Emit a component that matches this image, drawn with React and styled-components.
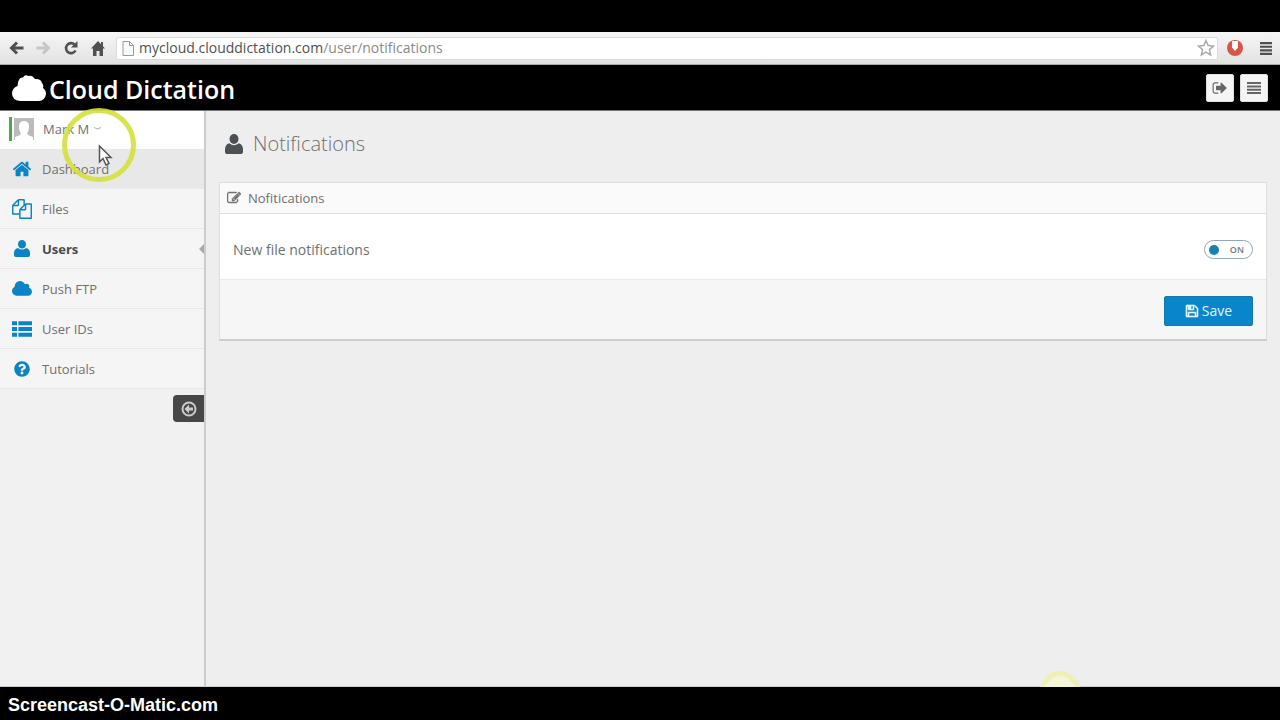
import React from "react";
import styled, { createGlobalStyle, css } from "styled-components";
import { FaQuestionCircle } from "react-icons/fa";

const GlobalStyle = createGlobalStyle`
  *, *::before, *::after { box-sizing: border-box; }
  body { margin: 0; background: #000; font-family: "Open Sans", sans-serif; font-size: 13px; color: #707070; }
  a { color: inherit; text-decoration: none; }
  button { font: inherit; cursor: pointer; }
`;

const Page = styled.div`
  min-height: 100vh;
  display: flex;
  flex-direction: column;
  padding-top: 32px;
`;

const BrowserBar = styled.div`
  height: 33px;
  flex: none;
  display: flex;
  align-items: center;
  gap: 6px;
  padding: 0 4px 0 6px;
  background: linear-gradient(#f6f6f6, #e2e2e2);
  border-bottom: 1px solid #aaa;
`;

const BrowserButton = styled.button`
  width: 21px;
  height: 24px;
  padding: 0;
  border: 0;
  background: none;
  color: ${(p) => (p.$faded ? "#c6c6c6" : "#505050")};
  display: grid;
  place-items: center;
`;

const BrowserActions = styled.div`
  display: flex;
  gap: 10px;
`;

const AddressBar = styled.div`
  flex: 1;
  height: 23px;
  margin-left: 2px;
  display: flex;
  align-items: center;
  gap: 5px;
  padding: 0 2px 0 5px;
  background: #fff;
  border: 1px solid #dadada;
  border-radius: 2px;
`;

const AddressText = styled.div`
  flex: 1;
  font-size: 14px;
  line-height: 20px;
  color: #8a8a8a;
  b { font-weight: 400; color: #505050; }
`;

const Header = styled.header`
  height: 46px;
  flex: none;
  display: flex;
  align-items: center;
  justify-content: space-between;
  padding: 0 12px;
  background: #000;
  border-bottom: 1px solid #777;
`;

const Brand = styled.a`
  display: flex;
  align-items: center;
  gap: 3px;
  color: #fff;
  font-size: 25px;
  font-weight: 600;
  line-height: 32px;
`;

const BrandName = styled.span`
  padding-top: 2px;
`;

const HeaderTools = styled.div`
  display: flex;
  gap: 6px;
`;

const HeaderButton = styled.button`
  width: 28px;
  height: 28px;
  padding: 0;
  display: grid;
  place-items: center;
  color: #666;
  background: #f5f5f5;
  border: 1px solid #ddd;
  border-radius: 2px;
`;

const Body = styled.div`
  flex: 1;
  display: flex;
  background: #eee;
  border-bottom: 1px solid #ccc;
`;

const Sidebar = styled.aside`
  width: 206px;
  flex: none;
  background: #f1f1f1;
  border-right: 2px solid #ccc;
`;

const Account = styled.button`
  width: 100%;
  height: 38px;
  display: flex;
  align-items: center;
  gap: 5px;
  padding: 0 9px 2px;
  color: #707070;
  background: #fff;
  border: 0;
`;

const Avatar = styled.span`
  display: block;
  height: 24px;
  margin-right: 4px;
  border-left: 3px solid #4fa64f;
  svg { display: block; margin: 1px 0 0 2px; }
`;

const NavItem = styled.a`
  height: 40px;
  display: flex;
  align-items: center;
  gap: 10px;
  padding-left: 12px;
  line-height: 20px;
  background: #f5f5f5;
  border-bottom: 1px solid #e8e8e8;
  > svg:first-child { color: #0a84c4; flex: none; }
  ${(p) => p.$hovered && css`background: #e8e8e8;`}
  ${(p) => p.$current && css`font-weight: 700; color: #4a4a4a;`}
`;

const CurrentMark = styled.span`
  margin-left: auto;
  border: 5px solid transparent;
  border-left: 0;
  border-right-color: #aaa;
`;

const Collapse = styled.button`
  display: grid;
  place-items: center;
  width: 31px;
  height: 27px;
  margin: 6px 0 0 auto;
  padding: 0;
  color: #ccc;
  background: #474747;
  border: 0;
  border-radius: 4px 0 0 4px;
`;

const Main = styled.main`
  flex: 1;
  padding: 16px 13px;
`;

const Title = styled.h1`
  margin: 0 0 21px;
  display: flex;
  align-items: center;
  gap: 10px;
  padding-left: 6px;
  font-size: 20px;
  line-height: 34px;
  font-weight: 300;
  color: #707070;
  svg { color: #4c4f53; }
`;

const Panel = styled.form`
  background: #fff;
  border: 1px solid #ddd;
  border-bottom: 2px solid #ccc;
`;

const PanelHeader = styled.h2`
  margin: 0;
  height: 31px;
  display: flex;
  align-items: center;
  gap: 7px;
  padding-left: 7px;
  font-size: 13px;
  font-weight: 400;
  background: #fafafa;
  border-bottom: 1px solid #ddd;
`;

const Setting = styled.label`
  height: 65px;
  display: flex;
  align-items: center;
  justify-content: space-between;
  padding: 6px 13px 0 13px;
  font-size: 14px;
`;

const Toggle = styled.span`
  width: 49px;
  height: 19px;
  display: flex;
  align-items: center;
  justify-content: space-between;
  padding: 0 8px 0 4px;
  border: 1px solid #8fa9b9;
  border-radius: 10px;
  background: #fff;
  color: #777;
  font-size: 9px;
  font-weight: 600;
`;

const ToggleInput = styled.input`
  appearance: none;
  width: 10px;
  height: 10px;
  margin: 0;
  border-radius: 50%;
  background: #1a7fb5;
`;

const PanelFooter = styled.div`
  height: 60px;
  display: flex;
  align-items: center;
  justify-content: flex-end;
  padding: 2px 13px 0;
  background: #f6f6f6;
  border-top: 1px solid #e9e9e9;
`;

const SaveButton = styled.button`
  width: 89px;
  height: 30px;
  display: flex;
  align-items: center;
  justify-content: center;
  gap: 3px;
  padding: 0;
  color: #e4f3fb;
  font-size: 14px;
  background: #0986cb;
  border: 1px solid #1478ad;
  border-radius: 2px;
`;

const Watermark = styled.footer`
  height: 33px;
  flex: none;
  padding: 1px 0 0 8px;
  color: #fff;
  font: 700 18px/35px "Liberation Sans", sans-serif;
`;

const Pointer = styled.div`
  position: absolute;
  left: 62px;
  top: 107px;
  pointer-events: none;
  svg { display: block; }
`;

const ClickRipple = styled.div`
  position: absolute;
  right: 200px;
  bottom: 33px;
  width: 40px;
  height: 16px;
  overflow: hidden;
  pointer-events: none;
  &::before {
    content: "";
    display: block;
    width: 40px;
    height: 40px;
    border: 5px solid #efefb8;
    border-radius: 50%;
    background: #f5f5d8;
  }
`;

const shapes = {
  home: "M1472 992v480q0 26-19 45t-45 19h-384v-384h-256v384h-384q-26 0-45-19t-19-45v-480q0-1 .5-3t.5-3l575-474 575 474q1 2 1 6zm223-69l-62 74q-8 9-21 11h-3q-13 0-21-7l-692-577-692 577q-12 8-24 7-13-2-21-11l-62-74q-8-10-7-23.5t11-21.5l719-599q32-26 76-26t76 26l244 204v-195q0-14 9-23t23-9h192q14 0 23 9t9 23v408l219 182q10 8 11 21.5t-7 23.5z",
  cloud: "M1856 1152q0 159-112.5 271.5t-271.5 112.5h-1088q-185 0-316.5-131.5t-131.5-316.5q0-132 71-241.5t187-163.5q-2-28-2-43 0-212 150-362t362-150q158 0 286.5 88t187.5 230q70-62 166-62 106 0 181 75t75 181q0 75-41 138 129 30 213 134.5t84 239.5z",
  files: "M1696 384q40 0 68 28t28 68v1216q0 40-28 68t-68 28h-960q-40 0-68-28t-28-68v-288h-544q-40 0-68-28t-28-68v-672q0-40 20-88t48-76l408-408q28-28 76-48t88-20h416q40 0 68 28t28 68v328q68-40 128-40h416zm-544 213l-299 299h299v-299zm-640-384l-299 299h299v-299zm196 647l316-316v-416h-384v416q0 40-28 68t-68 28h-416v640h512v-256q0-40 20-88t48-76zm956 804v-1152h-384v416q0 40-28 68t-68 28h-416v640h896z",
  list: "M0 200h448v360H0zM576 200h1216v360H576zM0 716h448v360H0zM576 716h1216v360H576zM0 1232h448v360H0zM576 1232h1216v360H576z",
  signOut: "M704 1440q0 4 1 20t.5 26.5-3 23.5-10 19.5-20.5 6.5h-320q-119 0-203.5-84.5t-84.5-203.5v-704q0-119 84.5-203.5t203.5-84.5h320q13 0 22.5 9.5t9.5 22.5q0 4 1 20t.5 26.5-3 23.5-10 19.5-20.5 6.5h-320q-66 0-113 47t-47 113v704q0 66 47 113t113 47h312l11.5 1 11.5 3 8 5.5 7 9 2 13.5zm928-544q0 26-19 45l-544 544q-19 19-45 19t-45-19-19-45v-288h-448q-26 0-45-19t-19-45v-384q0-26 19-45t45-19h448v-288q0-26 19-45t45-19 45 19l544 544q19 19 19 45z",
  edit: "M888 1184l116-116-152-152-116 116v56h96v96h56zm440-720q-16-16-33 1l-350 350q-17 17-1 33t33-1l350-350q17-17 1-33zm80 594v190q0 119-84.5 203.5t-203.5 84.5h-832q-119 0-203.5-84.5t-84.5-203.5v-832q0-119 84.5-203.5t203.5-84.5h832q63 0 117 25 15 7 18 23 3 17-9 29l-49 49q-14 14-32 8-23-6-45-6h-832q-66 0-113 47t-47 113v832q0 66 47 113t113 47h832q66 0 113-47t47-113v-126q0-13 9-22l64-64q15-15 35-7t20 29zm-96-738l288 288-672 672h-288v-288zm444 132l-92 92-288-288 92-92q28-28 68-28t68 28l152 152q28 28 28 68t-28 68z",
  save: "M512 1536h768v-384h-768v384zm896 0h128v-896q0-14-10-38.5t-20-34.5l-281-281q-10-10-34-20t-39-10v416q0 40-28 68t-68 28h-576q-40 0-68-28t-28-68v-416h-128v1280h128v-416q0-40 28-68t68-28h832q40 0 68 28t28 68v416zm-384-928v-320q0-13-9.5-22.5t-22.5-9.5h-192q-13 0-22.5 9.5t-9.5 22.5v320q0 13 9.5 22.5t22.5 9.5h192q13 0 22.5-9.5t9.5-22.5zm640 32v928q0 40-28 68t-68 28h-1344q-40 0-68-28t-28-68v-1344q0-40 28-68t68-28h928q40 0 88 20t76 48l280 280q28 28 48 76t20 88z",
};

const Glyph = ({ name, size = 20, box = "0 0 1792 1792", bold = 0 }) => (
  <svg width={size} height={size} viewBox={box} fill="currentColor" stroke="currentColor" strokeWidth={bold} aria-hidden="true">
    <path d={shapes[name]} />
  </svg>
);

const Person = ({ width, height }) => (
  <svg width={width} height={height} viewBox="0 0 18 20" preserveAspectRatio="none" fill="currentColor" aria-hidden="true">
    <ellipse cx="9" cy="5" rx="4.500" ry="5" />
    <path d="M4.300 9.300Q9 13.200 13.700 9.300Q18 10.500 18 15.500V18Q18 20 16 20H2Q0 20 0 18V15.500Q0 10.500 4.300 9.300z" />
  </svg>
);

const Bars = ({ width, height }) => (
  <svg width={width} height={height} viewBox="0 0 12 12" preserveAspectRatio="none" fill="none" stroke="currentColor" strokeWidth="2" aria-hidden="true">
    <path d="M0 1h12M0 4.400h12M0 7.700h12M0 11h12" />
  </svg>
);

const nav = [
  { label: "Dashboard", icon: <Glyph name="home" />, hovered: true },
  { label: "Files", icon: <Glyph name="files" /> },
  { label: "Users", icon: <svg width="20" height="17" viewBox="0 0 20 17"><g transform="translate(2 0)"><Person width={16} height={17} /></g></svg>, current: true },
  { label: "Push FTP", icon: <Glyph name="cloud" box="-64 0 1920 1792" /> },
  { label: "User IDs", icon: <Glyph name="list" /> },
  { label: "Tutorials", icon: <svg width="20" height="20" viewBox="0 0 20 20"><FaQuestionCircle x="2" y="2" size={16} /></svg> },
];

export default function App() {
  return (
    <Page>
      <GlobalStyle />
      <BrowserBar>
        <BrowserButton aria-label="Back">
          <svg width="15" height="14" viewBox="0 0 15 14" fill="none" stroke="currentColor" strokeWidth="3"><path d="M14.500 7H3M8 1.500L2.500 7L8 12.500" /></svg>
        </BrowserButton>
        <BrowserButton aria-label="Forward" $faded>
          <svg width="15" height="14" viewBox="0 0 15 14" fill="none" stroke="currentColor" strokeWidth="3"><path d="M.5 7H12M7 1.500L12.500 7L7 12.500" /></svg>
        </BrowserButton>
        <BrowserButton aria-label="Reload">
          <svg width="16" height="16" viewBox="0 0 16 16"><path d="M12.500 10.500A5 5 0 1 1 11.500 4.500" fill="none" stroke="currentColor" strokeWidth="2.600" /><path d="M14.500 1v6.500H8z" fill="currentColor" /></svg>
        </BrowserButton>
        <BrowserButton aria-label="Home">
          <svg width="14" height="15" viewBox="0 0 14 15" fill="currentColor"><path d="M7 0L0 7.500h2V15h3.500v-5h3v5H12V7.500h2L12 5.300V1h-2v2.200z" /></svg>
        </BrowserButton>
        <AddressBar>
          <svg width="12" height="15" viewBox="0 0 12 15" fill="#fafafa" stroke="#999"><path d="M1 .5h6.500l4 4v10H1zM7.500 .5v4h4" /></svg>
          <AddressText><b>mycloud.clouddictation.com</b>/user/notifications</AddressText>
          <svg width="18" height="18" viewBox="0 0 18 18" fill="#fff" stroke="#aaa" strokeWidth="1.500"><path d="M9 1.500l2.200 5 5.300.5-4 3.600 1.200 5.400L9 13.200 4.300 16l1.200-5.400-4-3.600 5.300-.5z" /></svg>
        </AddressBar>
        <BrowserActions>
          <BrowserButton aria-label="Downloads">
            <svg width="18" height="18" viewBox="0 0 18 18"><circle cx="9" cy="9" r="8" fill="#d9544a" /><path d="M6 2h6v6.500L9 12 6 8.500z" fill="#fff" /></svg>
          </BrowserButton>
          <BrowserButton aria-label="Browser menu"><Bars width={12} height={13} /></BrowserButton>
        </BrowserActions>
      </BrowserBar>
      <Header>
        <Brand href="#">
          <svg width="34" height="26" viewBox="0 0 34 26" fill="#fff" aria-hidden="true"><path d="M8 26Q0 25 0 18.500Q0 13 5.500 11Q6 2 11 2.500Q13-1 16.500 1Q20-.5 23 4Q29 3.500 30 8Q32 10 31 13Q34 15 34 19Q33 25.500 27 26z" /></svg>
          <BrandName>Cloud Dictation</BrandName>
        </Brand>
        <HeaderTools>
          <HeaderButton aria-label="Sign out"><Glyph name="signOut" size={16} /></HeaderButton>
          <HeaderButton aria-label="Menu"><Bars width={14} height={12} /></HeaderButton>
        </HeaderTools>
      </Header>
      <Body>
        <Sidebar>
          <Account>
            <Avatar>
              <svg width="20" height="22" viewBox="0 0 20 22"><path d="M0 0h20v22H0z" fill="#bbb" /><path d="M10 3c4 0 5.500 3 5 7-.3 2.500-1 4-2 5l1 2 5 2v3H1v-3l5-2 1-2c-1-1-1.700-2.500-2-5-.5-4 1-7 5-7z" fill="#fff" /></svg>
            </Avatar>
            Mark M
            <svg width="7" height="4" viewBox="0 0 7 4" fill="none" stroke="#aaa"><path d="M0 .5L3.500 2L7 .5" /></svg>
          </Account>
          <nav>
            {nav.map((item) => (
              <NavItem key={item.label} href="#" $hovered={item.hovered} $current={item.current}>
                {item.icon}
                {item.label}
                {item.current && <CurrentMark />}
              </NavItem>
            ))}
          </nav>
          <Collapse aria-label="Collapse menu">
            <svg width="16" height="16" viewBox="0 0 16 16"><circle cx="8" cy="8" r="6.500" fill="none" stroke="currentColor" strokeWidth="2" /><path d="M3.500 8L8 3.500V6.500h4v3H8v3z" fill="currentColor" /></svg>
          </Collapse>
        </Sidebar>
        <Main>
          <Title><Person width={18} height={20} />Notifications</Title>
          <Panel onSubmit={(e) => e.preventDefault()}>
            <PanelHeader><Glyph name="edit" size={14} bold={60} />Nofitications</PanelHeader>
            <Setting>
              New file notifications
              <Toggle><ToggleInput type="checkbox" defaultChecked />ON</Toggle>
            </Setting>
            <PanelFooter>
              <SaveButton><Glyph name="save" size={14} bold={80} />Save</SaveButton>
            </PanelFooter>
          </Panel>
        </Main>
      </Body>
      <Watermark>Screencast-O-Matic.com</Watermark>
      <Pointer>
        <svg width="76" height="78" viewBox="0 0 76 78">
          <circle cx="37" cy="38" r="34.500" fill="none" stroke="#d5e03c" strokeOpacity=".9" strokeWidth="5" />
          <path d="M37.500 39v16l3.500-3.500 3 6.500 3-1.500-3-6h5z" fill="#fff" stroke="#555" strokeWidth="1.500" />
        </svg>
      </Pointer>
      <ClickRipple />
    </Page>
  );
}
